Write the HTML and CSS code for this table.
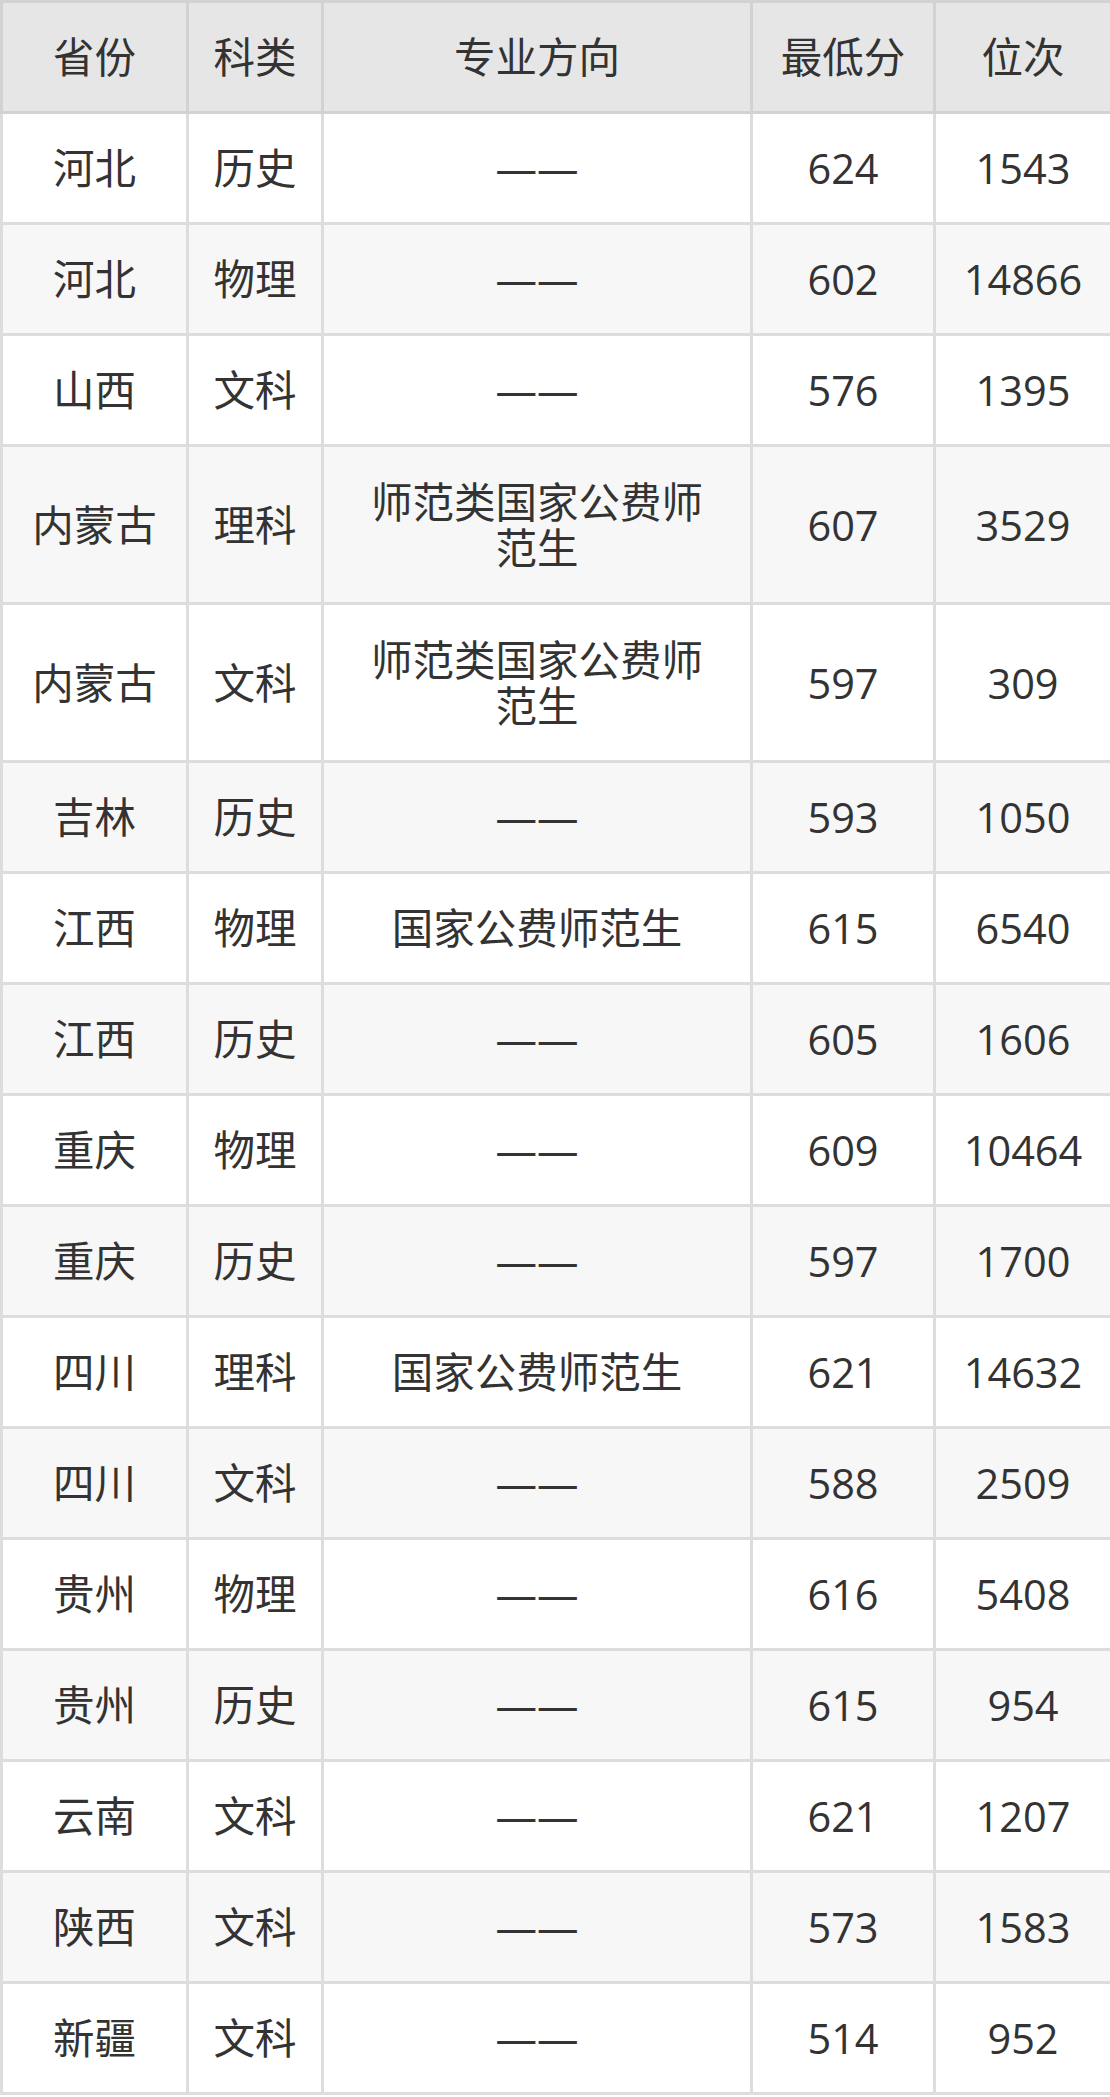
FILE: index.html
```html
<!DOCTYPE html>
<html lang="zh-CN">
<head>
<meta charset="utf-8">
<title>录取分数</title>
<link rel="stylesheet" href="styles.css">
</head>
<body>
<table class="score-table">
  <colgroup>
    <col class="c-prov"><col class="c-type"><col class="c-major"><col class="c-min"><col class="c-rank">
  </colgroup>
  <thead>
    <tr><th>省份</th><th>科类</th><th>专业方向</th><th>最低分</th><th>位次</th></tr>
  </thead>
  <tbody>
    <tr><td>河北</td><td>历史</td><td>——</td><td>624</td><td>1543</td></tr>
    <tr><td>河北</td><td>物理</td><td>——</td><td>602</td><td>14866</td></tr>
    <tr><td>山西</td><td>文科</td><td>——</td><td>576</td><td>1395</td></tr>
    <tr class="tall"><td>内蒙古</td><td>理科</td><td>师范类国家公费师范生</td><td>607</td><td>3529</td></tr>
    <tr class="tall"><td>内蒙古</td><td>文科</td><td>师范类国家公费师范生</td><td>597</td><td>309</td></tr>
    <tr><td>吉林</td><td>历史</td><td>——</td><td>593</td><td>1050</td></tr>
    <tr><td>江西</td><td>物理</td><td>国家公费师范生</td><td>615</td><td>6540</td></tr>
    <tr><td>江西</td><td>历史</td><td>——</td><td>605</td><td>1606</td></tr>
    <tr><td>重庆</td><td>物理</td><td>——</td><td>609</td><td>10464</td></tr>
    <tr><td>重庆</td><td>历史</td><td>——</td><td>597</td><td>1700</td></tr>
    <tr><td>四川</td><td>理科</td><td>国家公费师范生</td><td>621</td><td>14632</td></tr>
    <tr><td>四川</td><td>文科</td><td>——</td><td>588</td><td>2509</td></tr>
    <tr><td>贵州</td><td>物理</td><td>——</td><td>616</td><td>5408</td></tr>
    <tr><td>贵州</td><td>历史</td><td>——</td><td>615</td><td>954</td></tr>
    <tr><td>云南</td><td>文科</td><td>——</td><td>621</td><td>1207</td></tr>
    <tr><td>陕西</td><td>文科</td><td>——</td><td>573</td><td>1583</td></tr>
    <tr><td>新疆</td><td>文科</td><td>——</td><td>514</td><td>952</td></tr>
  </tbody>
</table>
</body>
</html>
```

FILE: styles.css
```css
html, body {
  margin: 0;
  padding: 0;
  background: #ffffff;
}

.score-table {
  width: 1110px;
  border-collapse: collapse;
  table-layout: fixed;
  font-family: "Open Sans", "Noto Sans CJK SC", sans-serif;
  font-size: 41.5px;
  line-height: 46px;
  color: #333333;
  border: 3px solid #d0d0d0;
}

.c-prov { width: 186px; }
.c-type { width: 135px; }
.c-major { width: 429px; }
.c-min { width: 183px; }
.c-rank { width: 177px; }

.score-table th,
.score-table td {
  text-align: center;
  vertical-align: middle;
  padding: 0 24px;
  font-weight: normal;
}

.score-table th {
  height: 108px;
  background: #e6e6e6;
  border: 3px solid #d2d2d2;
}

.score-table td {
  height: 108px;
  border: 3px solid #dddddd;
}

.score-table td:nth-child(3) {
  padding: 0 44px;
}

.score-table tr.tall td {
  height: 155px;
}

.score-table tbody tr:nth-child(even) td {
  background: #f7f7f7;
}

.score-table tbody tr:nth-child(odd) td {
  background: #ffffff;
}
```
